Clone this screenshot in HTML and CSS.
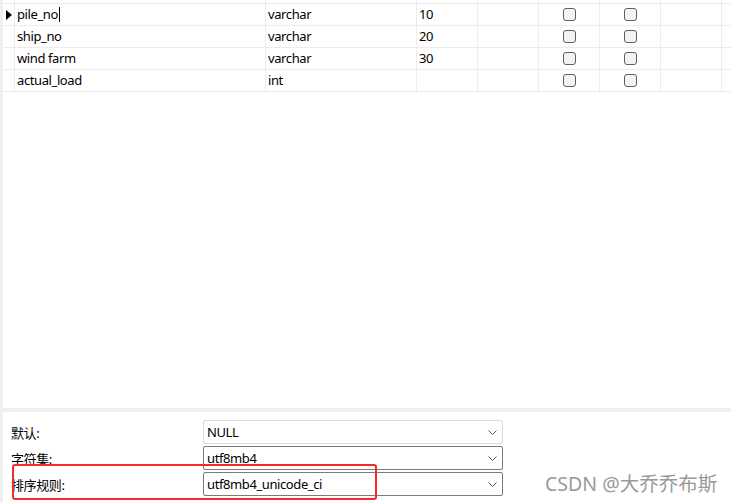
FILE: index.html
```html
<!DOCTYPE html>
<html lang="zh-CN">
<head>
<meta charset="utf-8">
<title>字段</title>
<link rel="stylesheet" href="styles.css">
</head>
<body>
<div class="grid">
  <div class="row top">
    <div class="c h"></div><div class="c n"></div><div class="c t"></div><div class="c s"></div><div class="c s"></div><div class="c s"></div><div class="c s"></div><div class="c s"></div><div class="c e"></div>
  </div>
  <div class="row">
    <div class="c h"><span class="mark"></span></div><div class="c n">pile_no<span class="caret"></span></div><div class="c t">varchar</div><div class="c s">10</div><div class="c s"></div><div class="c s ck"><span class="box"></span></div><div class="c s ck"><span class="box"></span></div><div class="c s"></div><div class="c e"></div>
  </div>
  <div class="row">
    <div class="c h"></div><div class="c n">ship_no</div><div class="c t">varchar</div><div class="c s">20</div><div class="c s"></div><div class="c s ck"><span class="box"></span></div><div class="c s ck"><span class="box"></span></div><div class="c s"></div><div class="c e"></div>
  </div>
  <div class="row">
    <div class="c h"></div><div class="c n">wind farm</div><div class="c t">varchar</div><div class="c s">30</div><div class="c s"></div><div class="c s ck"><span class="box"></span></div><div class="c s ck"><span class="box"></span></div><div class="c s"></div><div class="c e"></div>
  </div>
  <div class="row">
    <div class="c h"></div><div class="c n">actual_load</div><div class="c t">int</div><div class="c s"></div><div class="c s"></div><div class="c s ck"><span class="box"></span></div><div class="c s ck"><span class="box"></span></div><div class="c s"></div><div class="c e"></div>
  </div>
</div>
<div class="props">
  <div class="prop">
    <div class="label">默认:</div>
    <div class="select light"><span>NULL</span><svg class="chev" width="9" height="5" viewBox="0 0 9 5"><path d="M0.5 0.5 L4.5 4.5 L8.5 0.5" fill="none" stroke="#555" stroke-width="1"/></svg></div>
  </div>
  <div class="prop">
    <div class="label">字符集:</div>
    <div class="select"><span>utf8mb4</span><svg class="chev" width="9" height="5" viewBox="0 0 9 5"><path d="M0.5 0.5 L4.5 4.5 L8.5 0.5" fill="none" stroke="#555" stroke-width="1"/></svg></div>
  </div>
  <div class="prop">
    <div class="label">排序规则:</div>
    <div class="select"><span>utf8mb4_unicode_ci</span><svg class="chev" width="9" height="5" viewBox="0 0 9 5"><path d="M0.5 0.5 L4.5 4.5 L8.5 0.5" fill="none" stroke="#555" stroke-width="1"/></svg></div>
  </div>
</div>
<div class="highlight"></div>
<div class="watermark">CSDN @大乔乔布斯</div>
</body>
</html>
```
FILE: styles.css
```css
html, body {
  margin: 0;
  padding: 0;
}
body {
  width: 731px;
  height: 503px;
  overflow: hidden;
  background: #f0f0f0;
  font-family: "Noto Sans", "Noto Sans CJK SC", sans-serif;
  font-size: 13px;
  letter-spacing: -0.4px;
  color: #000;
  position: relative;
}
.grid {
  margin-left: 3px;
  height: 408px;
  background: #fff;
}
.row {
  display: flex;
  height: 22px;
}
.row.top {
  height: 4px;
}
.c {
  box-sizing: border-box;
  height: 100%;
  border-right: 1px solid #ececec;
  border-bottom: 1px solid #ececec;
  display: flex;
  align-items: center;
  padding-left: 2px;
  white-space: nowrap;
  position: relative;
  line-height: 1;
}
.c.h { width: 12px; padding: 0; }
.c.n { width: 251px; }
.c.t { width: 151px; }
.c.s { width: 61px; }
.c.e { flex: 1; border-right: none; }
.c.ck { justify-content: center; padding: 0; }
.mark {
  width: 0;
  height: 0;
  margin-left: 3px;
  margin-top: 1px;
  border-top: 5px solid transparent;
  border-bottom: 5px solid transparent;
  border-left: 6px solid #000;
}
.caret {
  display: inline-block;
  width: 1px;
  height: 15px;
  background: #000;
  margin-left: 1px;
}
.box {
  box-sizing: border-box;
  width: 13px;
  height: 13px;
  border: 1px solid #5f5f5f;
  border-radius: 3px;
  background: #f3f3f3;
}
.props {
  margin-top: 4px;
  margin-left: 3px;
  height: 91px;
  background: #fff;
  padding-top: 8px;
  box-sizing: border-box;
  display: flex;
  flex-direction: column;
  gap: 2px;
}
.prop {
  display: flex;
  align-items: center;
  height: 24px;
}
.label {
  width: 200px;
  padding-left: 8px;
  box-sizing: border-box;
}
.select {
  box-sizing: border-box;
  width: 300px;
  height: 24px;
  border: 1px solid #7a7a7a;
  border-radius: 2px;
  background: #fff;
  display: flex;
  align-items: center;
  justify-content: space-between;
  padding: 0 5px 0 3px;
}
.select.light {
  border-color: #dadada;
}
.chev {
  display: block;
}
.highlight {
  position: absolute;
  left: 12px;
  top: 464px;
  width: 365px;
  height: 36px;
  box-sizing: border-box;
  border: 2px solid #f52a2a;
  border-radius: 3px;
}
.watermark {
  position: absolute;
  left: 545px;
  top: 472px;
  font-family: "Noto Sans", "Noto Sans CJK SC", sans-serif;
  font-size: 19.5px;
  letter-spacing: 0;
  line-height: 24px;
  color: #9a9a9a;
  white-space: nowrap;
  text-shadow: 0 0 1px #fff;
}
```
